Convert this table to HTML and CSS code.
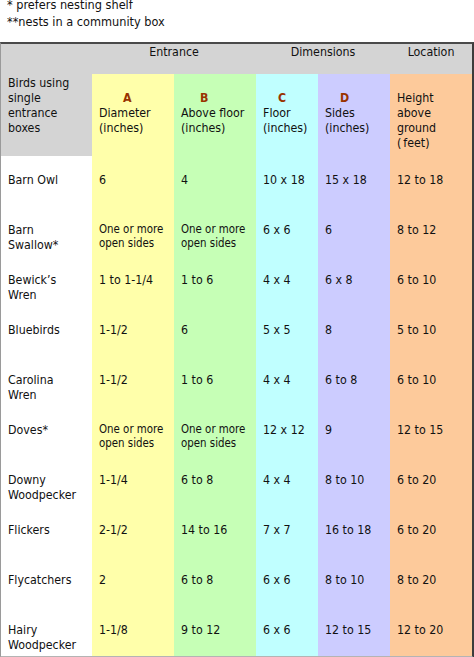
FILE: index.html
```html
<!DOCTYPE html>
<html lang="en">
<head>
<meta charset="utf-8">
<title>Nest box dimensions</title>
<link rel="stylesheet" href="styles.css">
</head>
<body>
<div class="notes">
  <div>* prefers nesting shelf</div>
  <div>**nests in a community box</div>
</div>
<table class="boxes">
  <colgroup>
    <col class="c-bird">
    <col class="c-a">
    <col class="c-b">
    <col class="c-c">
    <col class="c-d">
    <col class="c-loc">
  </colgroup>
  <thead>
    <tr class="group-row">
      <th class="birds-head" rowspan="2">Birds using<br>single<br>entrance<br>boxes</th>
      <th class="group" colspan="2">Entrance</th>
      <th class="group" colspan="2">Dimensions</th>
      <th class="group">Location</th>
    </tr>
    <tr class="label-row">
      <th class="label bg-a"><span class="letter la">A</span>Diameter<br>(inches)</th>
      <th class="label bg-b"><span class="letter lb">B</span>Above floor<br>(inches)</th>
      <th class="label bg-c"><span class="letter lc">C</span>Floor<br>(inches)</th>
      <th class="label bg-d"><span class="letter ld">D</span>Sides<br>(inches)</th>
      <th class="label bg-loc">Height<br>above<br>ground<br><span class="paren">(</span>feet)</th>
    </tr>
  </thead>
  <tbody>
    <tr><td class="bird">Barn Owl</td><td>6</td><td>4</td><td>10 x 18</td><td>15 x 18</td><td>12 to 18</td></tr>
    <tr><td class="bird">Barn<br>Swallow*</td><td class="small">One or more<br>open sides</td><td class="small">One or more<br>open sides</td><td>6 x 6</td><td>6</td><td>8 to 12</td></tr>
    <tr><td class="bird">Bewick’s<br>Wren</td><td>1 to 1-1/4</td><td>1 to 6</td><td>4 x 4</td><td>6 x 8</td><td>6 to 10</td></tr>
    <tr><td class="bird">Bluebirds</td><td>1-1/2</td><td>6</td><td>5 x 5</td><td>8</td><td>5 to 10</td></tr>
    <tr><td class="bird">Carolina<br>Wren</td><td>1-1/2</td><td>1 to 6</td><td>4 x 4</td><td>6 to 8</td><td>6 to 10</td></tr>
    <tr><td class="bird">Doves*</td><td class="small">One or more<br>open sides</td><td class="small">One or more<br>open sides</td><td>12 x 12</td><td>9</td><td>12 to 15</td></tr>
    <tr><td class="bird">Downy<br>Woodpecker</td><td>1-1/4</td><td>6 to 8</td><td>4 x 4</td><td>8 to 10</td><td>6 to 20</td></tr>
    <tr><td class="bird">Flickers</td><td>2-1/2</td><td>14 to 16</td><td>7 x 7</td><td>16 to 18</td><td>6 to 20</td></tr>
    <tr><td class="bird">Flycatchers</td><td>2</td><td>6 to 8</td><td>6 x 6</td><td>8 to 10</td><td>8 to 20</td></tr>
    <tr><td class="bird">Hairy<br>Woodpecker</td><td>1-1/8</td><td>9 to 12</td><td>6 x 6</td><td>12 to 15</td><td>12 to 20</td></tr>
  </tbody>
</table>
</body>
</html>
```
FILE: styles.css
```css
html, body {
  margin: 0;
  padding: 0;
  background: #ffffff;
}
body {
  font-family: "DejaVu Sans Condensed", "DejaVu Sans", sans-serif;
  font-stretch: condensed;
  font-size: 12.3px;
  line-height: 15px;
  color: #111111;
  overflow: hidden;
}
.notes {
  margin-top: -3px;
  height: 45px;
  padding-left: 7px;
  font-size: 12.6px;
  line-height: 16.5px;
}
.boxes {
  width: 474px;
  table-layout: fixed;
  border-collapse: separate;
  border-spacing: 0;
  border-top: 2px solid #4a4a4a;
  border-left: 1px solid #9a9a9a;
  border-right: 2px solid #3c3c3c;
  border-bottom: 2px solid #b4b4b4;
}
.c-bird { width: 91px; }
.c-a { width: 82px; background: #ffffaa; }
.c-b { width: 82px; background: #c6ffb6; }
.c-c { width: 62px; background: #c0ffff; }
.c-d { width: 72px; background: #ccccff; }
.c-loc { width: 82px; background: #fdca9b; }

.boxes th,
.boxes td {
  font-weight: normal;
  text-align: left;
  vertical-align: top;
  padding: 17px 2px 0 7px;
}
.group-row { height: 30px; }
.group-row th.group {
  background: #d4d4d4;
  text-align: center;
  padding: 1px 0 0;
}
.birds-head {
  background: #d4d4d4;
}
.boxes th.birds-head {
  padding-top: 32px;
}
.label-row { height: 82px; }
.bg-a { background: #ffffaa; }
.bg-b { background: #c6ffb6; }
.bg-c { background: #c0ffff; }
.bg-d { background: #ccccff; }
.bg-loc { background: #fdca9b; }
.letter {
  display: block;
  font-weight: bold;
  color: #993300;
}
.la { padding-left: 24px; }
.lb { padding-left: 19px; }
.lc { padding-left: 15px; }
.ld { padding-left: 15px; }
.paren { margin-right: 2px; }

.boxes tbody tr { height: 50px; }
.boxes td.bird { background: #ffffff; }
.boxes td.small {
  font-size: 11.4px;
  line-height: 14px;
  padding-top: 16px;
}
```
